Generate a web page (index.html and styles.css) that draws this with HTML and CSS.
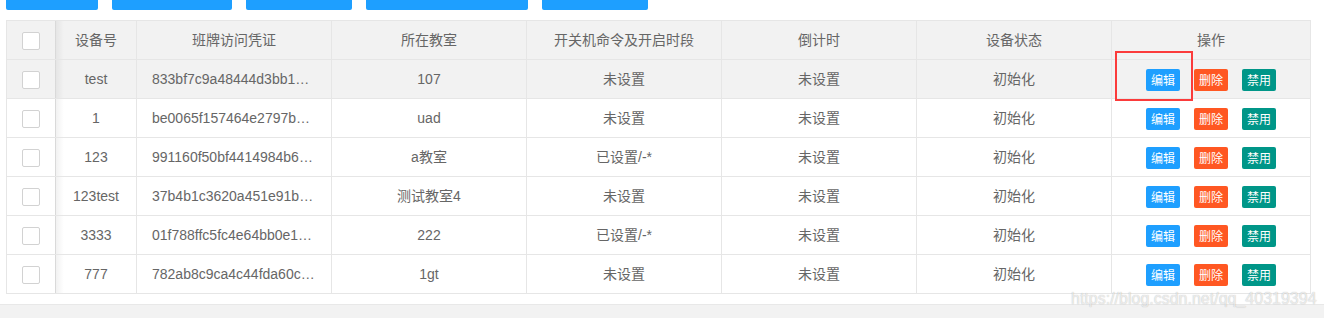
FILE: index.html
```html
<!DOCTYPE html>
<html lang="zh-CN">
<head>
    <meta charset="UTF-8">
    <title>设备管理</title>
    <link rel="stylesheet" href="styles.css">
</head>
<body>
    <div class="page">
        <div class="toolbar">
            <span class="tool-btn w1"></span>
            <span class="tool-btn w2"></span>
            <span class="tool-btn w3"></span>
            <span class="tool-btn w4"></span>
            <span class="tool-btn w3"></span>
        </div>

        <table class="dev-table">
            <colgroup>
                <col class="c-check">
                <col class="c-no">
                <col class="c-mid">
                <col class="c-mid">
                <col class="c-mid">
                <col class="c-mid">
                <col class="c-mid">
                <col class="c-op">
            </colgroup>
            <thead>
                <tr>
                    <th class="col-check"><div class="cell"><i class="checkbox"></i></div></th>
                    <th><div class="cell">设备号</div></th>
                    <th><div class="cell">班牌访问凭证</div></th>
                    <th><div class="cell">所在教室</div></th>
                    <th><div class="cell">开关机命令及开启时段</div></th>
                    <th><div class="cell">倒计时</div></th>
                    <th><div class="cell">设备状态</div></th>
                    <th><div class="cell">操作</div></th>
                </tr>
            </thead>
            <tbody>
                <tr class="row-hover">
                    <td class="col-check"><div class="cell"><i class="checkbox"></i></div></td>
                    <td><div class="cell">test</div></td>
                    <td><div class="cell">833bf7c9a48444d3bb12e5d7a9c04b61</div></td>
                    <td><div class="cell">107</div></td>
                    <td><div class="cell">未设置</div></td>
                    <td><div class="cell">未设置</div></td>
                    <td><div class="cell">初始化</div></td>
                    <td><div class="cell"><a class="btn-xs blue">编辑</a> <a class="btn-xs orange">删除</a> <a class="btn-xs green">禁用</a></div></td>
                </tr>
                <tr>
                    <td class="col-check"><div class="cell"><i class="checkbox"></i></div></td>
                    <td><div class="cell">1</div></td>
                    <td><div class="cell">be0065f157464e2797b3a1c58d2e06f4</div></td>
                    <td><div class="cell">uad</div></td>
                    <td><div class="cell">未设置</div></td>
                    <td><div class="cell">未设置</div></td>
                    <td><div class="cell">初始化</div></td>
                    <td><div class="cell"><a class="btn-xs blue">编辑</a> <a class="btn-xs orange">删除</a> <a class="btn-xs green">禁用</a></div></td>
                </tr>
                <tr>
                    <td class="col-check"><div class="cell"><i class="checkbox"></i></div></td>
                    <td><div class="cell">123</div></td>
                    <td><div class="cell">991160f50bf4414984b62d7e30c5a18b</div></td>
                    <td><div class="cell">a教室</div></td>
                    <td><div class="cell">已设置/-*</div></td>
                    <td><div class="cell">未设置</div></td>
                    <td><div class="cell">初始化</div></td>
                    <td><div class="cell"><a class="btn-xs blue">编辑</a> <a class="btn-xs orange">删除</a> <a class="btn-xs green">禁用</a></div></td>
                </tr>
                <tr>
                    <td class="col-check"><div class="cell"><i class="checkbox"></i></div></td>
                    <td><div class="cell">123test</div></td>
                    <td><div class="cell">37b4b1c3620a451e91b8c2d04e6a7f35</div></td>
                    <td><div class="cell">测试教室4</div></td>
                    <td><div class="cell">未设置</div></td>
                    <td><div class="cell">未设置</div></td>
                    <td><div class="cell">初始化</div></td>
                    <td><div class="cell"><a class="btn-xs blue">编辑</a> <a class="btn-xs orange">删除</a> <a class="btn-xs green">禁用</a></div></td>
                </tr>
                <tr>
                    <td class="col-check"><div class="cell"><i class="checkbox"></i></div></td>
                    <td><div class="cell">3333</div></td>
                    <td><div class="cell">01f788ffc5fc4e64bb0e19a3d26c7b50</div></td>
                    <td><div class="cell">222</div></td>
                    <td><div class="cell">已设置/-*</div></td>
                    <td><div class="cell">未设置</div></td>
                    <td><div class="cell">初始化</div></td>
                    <td><div class="cell"><a class="btn-xs blue">编辑</a> <a class="btn-xs orange">删除</a> <a class="btn-xs green">禁用</a></div></td>
                </tr>
                <tr>
                    <td class="col-check"><div class="cell"><i class="checkbox"></i></div></td>
                    <td><div class="cell">777</div></td>
                    <td><div class="cell">782ab8c9ca4c44fda60c5e1b39d2a74</div></td>
                    <td><div class="cell">1gt</div></td>
                    <td><div class="cell">未设置</div></td>
                    <td><div class="cell">未设置</div></td>
                    <td><div class="cell">初始化</div></td>
                    <td><div class="cell"><a class="btn-xs blue">编辑</a> <a class="btn-xs orange">删除</a> <a class="btn-xs green">禁用</a></div></td>
                </tr>
            </tbody>
        </table>

        <div class="footer-bar"></div>

        <!-- 标注框 -->
        <div class="mark-box"></div>
        <div class="watermark">https://blog.csdn.net/qq_40319394</div>
    </div>
</body>
</html>
```

FILE: styles.css
```css
* {
    margin: 0;
    padding: 0;
    box-sizing: border-box;
}
body {
    font-family: "Liberation Sans", Arial, "Noto Sans CJK SC", sans-serif;
    font-size: 14px;
    color: #666;
    background: #fff;
}
.page {
    position: relative;
    height: 318px;
    overflow: hidden;
}

/* 顶部工具栏按钮（只露出下半截） */
.toolbar {
    display: flex;
    gap: 14px;
    padding-left: 6px;
    height: 10px;
}
.tool-btn {
    display: block;
    height: 10px;
    background-color: #1e9fff;
    border-radius: 0 0 2px 2px;
}
.w1 { width: 92px; }
.w2 { width: 120px; }
.w3 { width: 106px; }
.w4 { width: 162px; }

/* 数据表格 */
.dev-table {
    margin: 10px 0 0 6px;
    width: 1304px;
    table-layout: fixed;
    border-collapse: collapse;
    border: 1px solid #e6e6e6;
}
.c-check { width: 49px; }
.c-no { width: 81px; }
.c-mid { width: 195px; }
.c-op { width: 199px; }

.dev-table th,
.dev-table td {
    padding: 5px 0;
    border: 1px solid #e6e6e6;
    font-weight: normal;
    text-align: center;
}
.dev-table thead tr,
.dev-table tr.row-hover {
    background-color: #f2f2f2;
}
.cell {
    height: 28px;
    line-height: 28px;
    padding: 0 15px;
    overflow: hidden;
    white-space: nowrap;
    text-overflow: ellipsis;
}

/* 左侧固定列的阴影 */
.col-check {
    position: relative;
}
.col-check::after {
    content: "";
    position: absolute;
    top: 0;
    bottom: 0;
    left: 100%;
    width: 9px;
    background: linear-gradient(to right, rgba(0, 0, 0, .06), rgba(0, 0, 0, 0));
}
.col-check .cell {
    padding: 0;
}
.checkbox {
    display: inline-block;
    width: 18px;
    height: 18px;
    vertical-align: middle;
    border: 1px solid #d2d2d2;
    border-radius: 2px;
    background-color: #fff;
}

/* 操作按钮 */
.btn-xs {
    display: inline-block;
    height: 22px;
    line-height: 22px;
    padding: 0 5px;
    font-family: "Noto Sans CJK SC", sans-serif;
    font-size: 12px;
    color: #fff;
    border-radius: 2px;
    vertical-align: middle;
}
.btn-xs + .btn-xs {
    margin-left: 10px;
}
.blue { background-color: #1e9fff; }
.orange { background-color: #ff5722; }
.green { background-color: #009688; }

.footer-bar {
    margin-top: 10px;
    height: 20px;
    background-color: #f2f2f2;
    border-top: 1px solid #e8e8e8;
}

.mark-box {
    position: absolute;
    left: 1115px;
    top: 51px;
    width: 78px;
    height: 50px;
    border: 2px solid #fb3b3b;
}
.watermark {
    position: absolute;
    left: 1071px;
    top: 290px;
    font-size: 16px;
    color: rgba(255, 255, 255, .7);
    text-shadow: 0 0 1px rgba(0, 0, 0, .3);
}
```
